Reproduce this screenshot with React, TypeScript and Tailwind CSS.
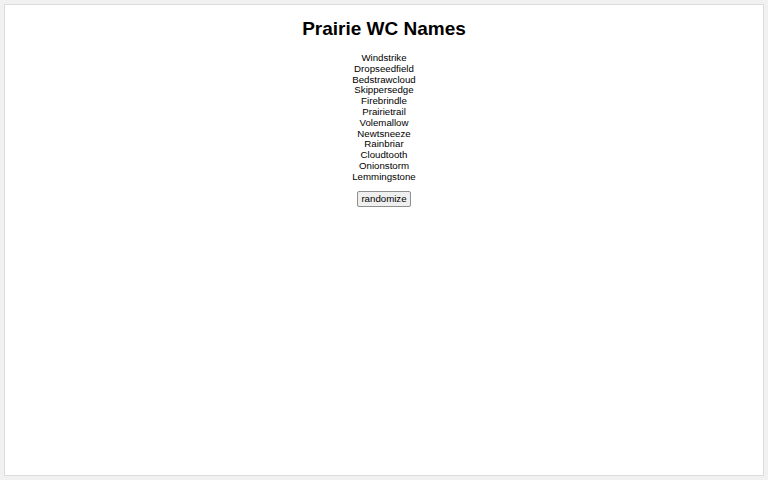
const names = [
  "Windstrike",
  "Dropseedfield",
  "Bedstrawcloud",
  "Skippersedge",
  "Firebrindle",
  "Prairietrail",
  "Volemallow",
  "Newtsneeze",
  "Rainbriar",
  "Cloudtooth",
  "Onionstorm",
  "Lemmingstone",
];

export default function App() {
  return (
    <div className="w-[768px] h-[480px] bg-[#f1f1f1] p-[4px] font-['Liberation_Sans',Arial,sans-serif] text-black">
      <div className="h-full bg-white border border-[#dcdcdc] flex flex-col items-center">
        <h1 className="text-[19px] font-bold leading-[24px] mt-[12px]">Prairie WC Names</h1>
        <div className="mt-[12px] flex flex-col items-center text-[9.7px] leading-[10.8px]">
          {names.map((n) => (
            <div key={n}>{n}</div>
          ))}
        </div>
        <button className="mt-[8px] text-[9.7px] leading-[12px] px-[3px] py-[1px] border border-[#8f8f8f] rounded-[2px] bg-[#efefef]">
          randomize
        </button>
      </div>
    </div>
  );
}
